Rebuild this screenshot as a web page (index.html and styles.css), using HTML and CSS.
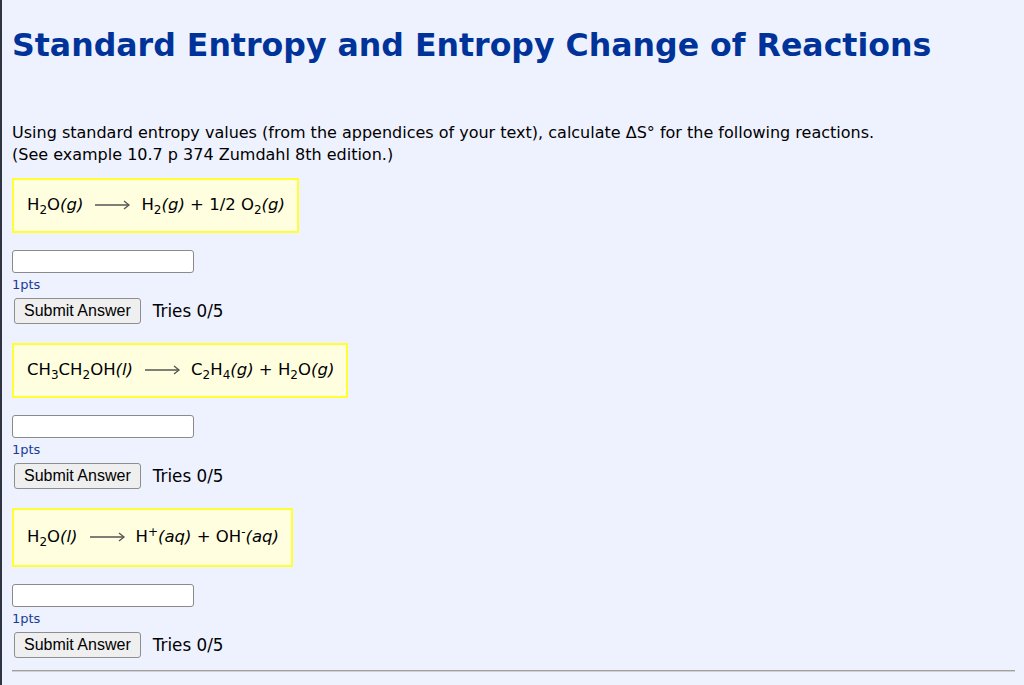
FILE: index.html
```html
<!DOCTYPE html>
<html>
<head>
<meta charset="utf-8">
<link rel="stylesheet" href="styles.css">
</head>
<body>
<div class="page">
  <h1 class="title">Standard Entropy and Entropy Change of Reactions</h1>
  <p class="intro">Using standard entropy values (from the appendices of your text), calculate ΔS° for the following reactions.<br>(See example 10.7 p 374 Zumdahl 8th edition.)</p>

  <div class="question">
    <div class="rxn">H<sub>2</sub>O<i>(g)</i><svg class="arrow" width="36" height="10" viewBox="0 0 36 10"><line x1="0" y1="5" x2="34" y2="5"/><polyline points="29,1 34,5 29,9"/></svg>H<sub>2</sub><i>(g)</i> + 1/2 O<sub>2</sub><i>(g)</i></div>
    <input class="answer" type="text">
    <div class="pts">1pts</div>
    <div class="submit-row"><button class="btn">Submit Answer</button><span class="tries">Tries 0/5</span></div>
  </div>

  <div class="question">
    <div class="rxn">CH<sub>3</sub>CH<sub>2</sub>OH<i>(l)</i><svg class="arrow" width="36" height="10" viewBox="0 0 36 10"><line x1="0" y1="5" x2="34" y2="5"/><polyline points="29,1 34,5 29,9"/></svg>C<sub>2</sub>H<sub>4</sub><i>(g)</i> + H<sub>2</sub>O<i>(g)</i></div>
    <input class="answer" type="text">
    <div class="pts">1pts</div>
    <div class="submit-row"><button class="btn">Submit Answer</button><span class="tries">Tries 0/5</span></div>
  </div>

  <div class="question">
    <div class="rxn rxn-tall">H<sub>2</sub>O<i>(l)</i><svg class="arrow" width="36" height="10" viewBox="0 0 36 10"><line x1="0" y1="5" x2="34" y2="5"/><polyline points="29,1 34,5 29,9"/></svg>H<sup>+</sup><i>(aq)</i> + OH<sup>-</sup><i>(aq)</i></div>
    <input class="answer" type="text">
    <div class="pts">1pts</div>
    <div class="submit-row"><button class="btn">Submit Answer</button><span class="tries">Tries 0/5</span></div>
  </div>

  <hr class="rule">
</div>
</body>
</html>
```
FILE: styles.css
```css
html, body {
  margin: 0;
  padding: 0;
  background: #eef2ff;
}
body {
  border-left: 2px solid #2e3540;
  min-height: 685px;
  box-sizing: border-box;
  font-family: "DejaVu Sans", Verdana, sans-serif;
  color: #000;
}
.page {
  padding: 28px 9px 0 10px;
}
.title {
  margin: 0;
  font-size: 31.6px;
  line-height: 34px;
  font-weight: bold;
  color: #003399;
}
.intro {
  margin: 60px 0 0 0;
  font-size: 16px;
  line-height: 22px;
}
.question {
  display: flex;
  flex-direction: column;
  align-items: flex-start;
}
.rxn {
  margin-top: 12px;
  border: 2px solid #ffff33;
  background: #ffffe0;
  padding: 15px 12px 16px 13px;
  font-size: 16.5px;
  line-height: 20px;
  white-space: nowrap;
}
.question + .question .rxn { margin-top: 19px; }
.rxn-tall { padding-top: 17px; padding-bottom: 18px; }
.rxn sub, .rxn sup {
  font-size: 12px;
  line-height: 0;
}
.rxn sub { vertical-align: -4px; }
.rxn sup { vertical-align: 6px; }
.rxn i { font-style: italic; }
.arrow {
  vertical-align: middle;
  margin: -2px 10px 0 12px;
  stroke: #555;
  stroke-width: 1.3;
  fill: none;
}
.answer {
  margin: 17px 0 0 0;
  width: 182px;
  height: 23px;
  box-sizing: border-box;
  border: 1px solid #8a8a8a;
  border-radius: 3px;
  background: #fff;
  padding: 2px 4px;
}
.pts {
  margin-top: 3px;
  font-size: 13px;
  line-height: 18px;
  color: #1a3c96;
}
.submit-row {
  margin-top: 4px;
  display: flex;
  align-items: center;
}
.btn {
  margin-left: 2px;
  height: 26px;
  padding: 0 9px;
  font-family: "Liberation Sans", Arial, sans-serif;
  font-size: 16px;
  color: #000;
  background: #efefef;
  border: 1px solid #8e8e8e;
  border-radius: 3px;
}
.tries {
  margin-left: 12px;
  font-size: 16.8px;
}
.rule {
  margin: 12px 0 0 0;
  border: 0;
  border-top: 1px solid #a0a0a0;
  border-bottom: 1px solid #d0d0d0;
  height: 0;
}
```
